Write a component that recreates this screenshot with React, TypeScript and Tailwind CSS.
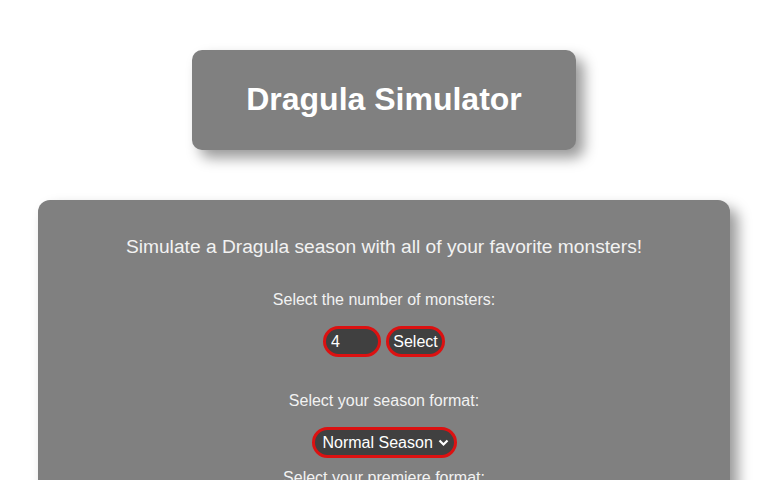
import { useState } from 'react';

const pill =
  'h-[31px] rounded-full border-[3px] border-[#dc1111] bg-[#404040] text-[16px] text-white outline-none';

export default function App() {
  const [count, setCount] = useState('4');
  const [format, setFormat] = useState('normal');

  return (
    <div className="flex min-h-screen flex-col items-center bg-white pt-[50px] font-['Liberation_Sans',Arial,sans-serif]">
      <header className="flex h-[100px] w-[384px] items-center justify-center rounded-[10px] bg-[#808080] pb-[2px] shadow-[8px_8px_14px_rgba(0,0,0,0.4)]">
        <h1 className="text-[32px] font-bold text-white">Dragula Simulator</h1>
      </header>

      <main className="mt-[50px] flex w-[692px] flex-col items-center rounded-[12px] bg-[#808080] pt-[36px] pb-[40px] text-[#f2f2f2] shadow-[8px_8px_14px_rgba(0,0,0,0.4)]">
        <p className="text-[19.2px] leading-[22px]">
          Simulate a Dragula season with all of your favorite monsters!
        </p>

        <p className="mt-[33px] text-[16px] leading-[18px]">Select the number of monsters:</p>
        <div className="mt-[17px] flex gap-[5px]">
          <input
            type="number"
            value={count}
            onChange={(e) => setCount(e.target.value)}
            className={`${pill} w-[58px] appearance-none pl-[5px] [&::-webkit-inner-spin-button]:appearance-none`}
          />
          <button className={`${pill} w-[59px] px-[4px]`}>Select</button>
        </div>

        <p className="mt-[35px] text-[16px] leading-[18px]">Select your season format:</p>
        <div className="relative mt-[17px]">
          <select
            value={format}
            onChange={(e) => setFormat(e.target.value)}
            className={`${pill} w-[145px] appearance-none pl-[8px] pr-[20px]`}
          >
            <option value="normal">Normal Season</option>
            <option value="allstars">All Stars</option>
          </select>
          <svg
            className="pointer-events-none absolute top-[12px] right-[8px]"
            width="11"
            height="8"
            viewBox="0 0 11 8"
          >
            <path d="M1.5 1.5 5.5 5.5 9.5 1.5" fill="none" stroke="white" strokeWidth="2.2" />
          </svg>
        </div>

        <p className="mt-[11px] text-[16px] leading-[18px]">Select your premiere format:</p>
      </main>
    </div>
  );
}
